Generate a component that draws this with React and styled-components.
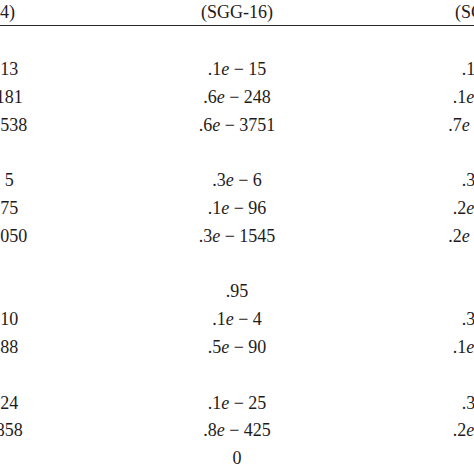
import React from "react";
import styled, { createGlobalStyle } from "styled-components";

const GlobalStyle = createGlobalStyle`
  html, body {
    margin: 0;
    padding: 0;
    background: #ffffff;
  }
  body {
    font-family: "Liberation Serif", "Times New Roman", serif;
    color: #1f1b1c;
  }
`;

const Viewport = styled.div`
  width: 474px;
  height: 474px;
  overflow: hidden;
  background: #ffffff;
`;

// the table is wider than the crop: first and last columns run off the edges
const Table = styled.div`
  width: 756px;
  margin-left: -135px;
  font-size: 18px;
`;

const Head = styled.div`
  display: grid;
  grid-template-columns: 248px 248px 260px;
  height: 25px;
  border-bottom: 1px solid #2a2627;
`;

const HeadCell = styled.div`
  line-height: 25px;
  text-align: center;
  white-space: nowrap;
  padding-right: ${(p) => p.$shift || 0}px;
`;

const Body = styled.div`
  padding-top: 2.2px;
`;

const Row = styled.div`
  display: grid;
  grid-template-columns: 248px 248px 260px;
  height: 27.8px;
`;

const Cell = styled.div`
  line-height: 27.8px;
  text-align: center;
  white-space: nowrap;
`;

const E = styled.i`
  font-style: italic;
`;

const Val = ({ v }) => {
  if (!v) return null;
  const m = v.match(/^(\.\d)e(\d+)$/);
  if (!m) return <>{v}</>;
  return (
    <>
      {m[1]}
      <E>e</E> − {m[2]}
    </>
  );
};

const rows = [
  [".2e13", ".1e15", ".1e14"],
  [".4e181", ".6e248", ".1e2473"],
  [".5e1538", ".6e3751", ".7e37514"],
  ["", "", ""],
  [".1e5", ".3e6", ".3e12"],
  [".1e75", ".1e96", ".2e1960"],
  [".2e1050", ".3e1545", ".2e15450"],
  ["", "", ""],
  ["", ".95", ""],
  [".3e10", ".1e4", ".3e10"],
  [".1e88", ".5e90", ".1e9020"],
  ["", "", ""],
  [".2e24", ".1e25", ".3e25"],
  [".4e858", ".8e425", ".2e4250"],
  ["", "0", "0"],
];

export default function App() {
  return (
    <>
      <GlobalStyle />
      <Viewport>
        <Table>
          <Head>
            <HeadCell $shift={20}>(SGG-14)</HeadCell>
            <HeadCell>(SGG-16)</HeadCell>
            <HeadCell>(SGG-18)</HeadCell>
          </Head>
          <Body>
            <Row />
            {rows.map((r, i) => (
              <Row key={i}>
                {r.map((v, j) => (
                  <Cell key={j}>
                    <Val v={v} />
                  </Cell>
                ))}
              </Row>
            ))}
          </Body>
        </Table>
      </Viewport>
    </>
  );
}
